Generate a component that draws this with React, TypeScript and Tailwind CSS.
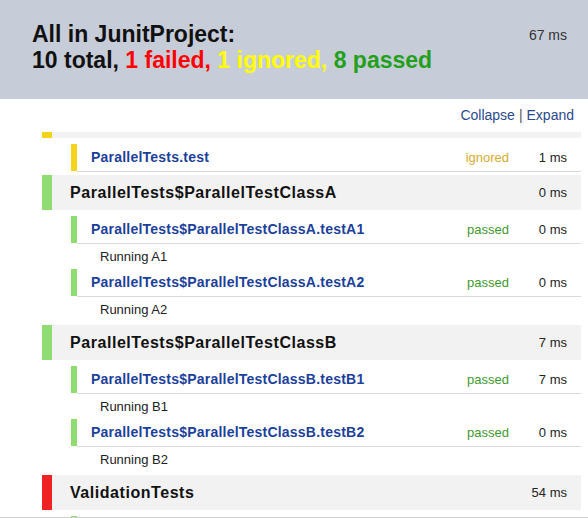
type Status = 'passed' | 'ignored' | 'failed';

type Test = { name: string; status: Status; ms: number; output?: string; stub?: boolean };
type Group = { name: string; status: Status; ms: number; tests: Test[]; partial?: boolean };

const barColor: Record<Status, string> = {
  passed: 'bg-[#8fdc72]',
  ignored: 'bg-[#f5d31c]',
  failed: 'bg-[#ee2424]',
};

const statusText: Record<Status, string> = {
  passed: 'text-[#3f9a2e]',
  ignored: 'text-[#d6ac2c]',
  failed: 'text-[#e02020]',
};

const groups: Group[] = [
  {
    name: 'ParallelTests',
    status: 'ignored',
    ms: 1,
    partial: true,
    tests: [{ name: 'ParallelTests.test', status: 'ignored', ms: 1 }],
  },
  {
    name: 'ParallelTests$ParallelTestClassA',
    status: 'passed',
    ms: 0,
    tests: [
      { name: 'ParallelTests$ParallelTestClassA.testA1', status: 'passed', ms: 0, output: 'Running A1' },
      { name: 'ParallelTests$ParallelTestClassA.testA2', status: 'passed', ms: 0, output: 'Running A2' },
    ],
  },
  {
    name: 'ParallelTests$ParallelTestClassB',
    status: 'passed',
    ms: 7,
    tests: [
      { name: 'ParallelTests$ParallelTestClassB.testB1', status: 'passed', ms: 7, output: 'Running B1' },
      { name: 'ParallelTests$ParallelTestClassB.testB2', status: 'passed', ms: 0, output: 'Running B2' },
    ],
  },
  {
    name: 'ValidationTests',
    status: 'failed',
    ms: 54,
    // next row is below the fold, only its bar peeks in
    tests: [{ name: '', status: 'passed', ms: 0, stub: true }],
  },
];

function TestRow({ test }: { test: Test }) {
  if (test.stub) {
    return (
      <div className="flex h-[28px]">
        <div className={`w-[6px] h-[27px] shrink-0 ${barColor[test.status]}`} />
        <div className="flex-1 border-b border-[#dadada]" />
      </div>
    );
  }
  return (
    <div>
      <div className="flex h-[28px]">
        <div className={`w-[6px] h-[27px] shrink-0 ${barColor[test.status]}`} />
        <div className="flex-1 flex items-center border-b border-[#dadada] pl-[14px] pr-[14px]">
          <span className="flex-1 text-[14px] font-bold tracking-[0.22px] text-[#1c3f9b]">{test.name}</span>
          <span className={`text-[13px] ${statusText[test.status]}`}>{test.status}</span>
          <span className="w-[58px] text-right text-[13px] text-[#222]">{test.ms} ms</span>
        </div>
      </div>
      {test.output && (
        <div className="h-[25px] flex items-center pl-[29px] text-[13px] text-[#222]">{test.output}</div>
      )}
    </div>
  );
}

function GroupBlock({ group }: { group: Group }) {
  return (
    <div>
      {group.partial ? (
        <div className="flex h-[6px]">
          <div className={`w-[10px] shrink-0 ${barColor[group.status]}`} />
          <div className="flex-1 bg-[#f2f2f2]" />
        </div>
      ) : (
        <div className="flex h-[35px]">
          <div className={`w-[10px] shrink-0 ${barColor[group.status]}`} />
          <div className="flex-1 flex items-center bg-[#f2f2f2] pl-[18px] pr-[14px]">
            <span className="flex-1 text-[16px] font-bold tracking-[0.55px] text-[#111]">{group.name}</span>
            <span className="text-[13px] text-[#222]">{group.ms} ms</span>
          </div>
        </div>
      )}
      <div className="pl-[29px] pt-[6px] pb-[3px]">
        {group.tests.map((t, i) => (
          <TestRow key={t.name || i} test={t} />
        ))}
      </div>
    </div>
  );
}

export default function App() {
  return (
    <div
      className="h-[518px] overflow-hidden flex flex-col bg-white"
      style={{ fontFamily: '"Liberation Sans", Arial, sans-serif' }}
    >
      <header className="bg-[#c7ccd9] h-[99px] shrink-0 flex pl-[32px] pr-[21px] pt-[21px]">
        <h1 className="flex-1 text-[23px] leading-[26px] font-bold text-[#111]">
          <div>All in JunitProject:</div>
          <div>
            10 total, <span className="text-[#f00]">1 failed,</span>{' '}
            <span className="text-[#ffff00]">1 ignored,</span>{' '}
            <span className="text-[#23a01a]">8 passed</span>
          </div>
        </h1>
        <span className="text-[14px] text-[#333] pt-[4px]">67 ms</span>
      </header>
      <div className="h-[33px] shrink-0 flex items-center justify-end pr-[14px] text-[14px]">
        <a className="text-[#2b4a8e]">Collapse</a>
        <span className="text-[#555] px-[4px]">|</span>
        <a className="text-[#2b4a8e]">Expand</a>
      </div>
      <main className="flex-1 overflow-hidden pl-[42px] pr-[7px]">
        {groups.map((g) => (
          <GroupBlock key={g.name} group={g} />
        ))}
      </main>
      <div className="h-[1px] shrink-0 bg-[#d0d0d0]" />
    </div>
  );
}
